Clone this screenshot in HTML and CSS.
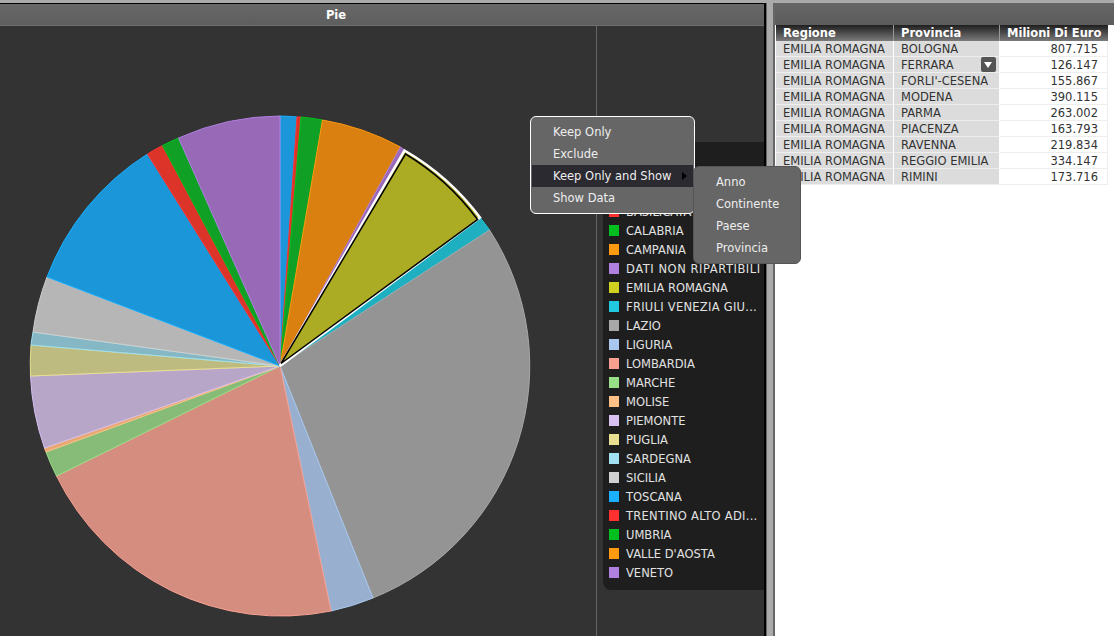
FILE: index.html
```html
<!DOCTYPE html>
<html lang="it">

<head>
  <meta charset="UTF-8">
  <title>Pie</title>
  <link rel="stylesheet" href="styles.css">
</head>

<body>
  <div class="chart-panel">
    <div class="chart-title">Pie</div>
    <div class="chart-body">
      <svg class="pie" width="597" height="610" viewBox="0 26 596 610">
        <path fill="#1b96d8" stroke="#1ab0ff" d="M280,366 L280,116 A250,250 0 0 1 297,117 Z" />
        <path fill="#dd342a" stroke="#ff3030" d="M280,366 L297,117 A250,250 0 0 1 301,117 Z" />
        <path fill="#0fa025" stroke="#00c020" d="M280,366 L301,117 A250,250 0 0 1 322.5,120 Z" />
        <path fill="#d98010" stroke="#ff9910" d="M280,366 L322.5,120 A250,250 0 0 1 400.5,147 Z" />
        <path fill="#9a6ab8" stroke="#b080e0" d="M280,366 L400.5,147 A250,250 0 0 1 404,149.5 Z" />
        <path fill="#1eb0c0" stroke="#20c8e0" d="M280,366 L480,217.5 A250,250 0 0 1 489.5,230 Z" />
        <path fill="#949494" stroke="#a8a8a8" d="M280,366 L489.5,230 A250,250 0 0 1 373,598 Z" />
        <path fill="#99afcf" stroke="#a8c8f0" d="M280,366 L373,598 A250,250 0 0 1 331,611 Z" />
        <path fill="#d58d80" stroke="#f8a090" d="M280,366 L331,611 A250,250 0 0 1 56.5,476 Z" />
        <path fill="#87bb78" stroke="#98e088" d="M280,366 L56.5,476 A250,250 0 0 1 46,452 Z" />
        <path fill="#e8a874" stroke="#ffc088" d="M280,366 L46,452 A250,250 0 0 1 44.5,448 Z" />
        <path fill="#b8a6c9" stroke="#d8c0f0" d="M280,366 L44.5,448 A250,250 0 0 1 30.5,376 Z" />
        <path fill="#bdbb80" stroke="#e8e090" d="M280,366 L30.5,376 A250,250 0 0 1 31,345 Z" />
        <path fill="#85b8c4" stroke="#a0e0f0" d="M280,366 L31,345 A250,250 0 0 1 33,332 Z" />
        <path fill="#b6b6b6" stroke="#d0d0d0" d="M280,366 L33,332 A250,250 0 0 1 47,277 Z" />
        <path fill="#1b96d8" stroke="#1ab0ff" d="M280,366 L47,277 A250,250 0 0 1 147.5,154 Z" />
        <path fill="#dd342a" stroke="#ff3030" d="M280,366 L147.5,154 A250,250 0 0 1 162.5,145.5 Z" />
        <path fill="#0fa025" stroke="#00c020" d="M280,366 L162.5,145.5 A250,250 0 0 1 178.5,138 Z" />
        <path fill="#9769b6" stroke="#b080e0" d="M280,366 L178.5,138 A250,250 0 0 1 280,116 Z" />
        <path fill="#acac24" stroke="#fff" stroke-width="2.5" d="M280,366 L404.5,150.5 A250,250 0 0 1 480,217.5 Z" />
        <path fill="#acac24" stroke="#000" stroke-width="1.5" d="M281,363.5 L405.5,154 A248,248 0 0 1 477.5,219.5 Z" />
      </svg>
      <ul class="legend">
        <li><span class="swatch c-blue"></span>ABRUZZO</li>
        <li><span class="swatch c-red"></span>BASILICATA</li>
        <li><span class="swatch c-green"></span>CALABRIA</li>
        <li><span class="swatch c-orange"></span>CAMPANIA</li>
        <li class="wider"><span class="swatch c-purple"></span>DATI NON RIPARTIBILI</li>
        <li><span class="swatch c-yellow"></span>EMILIA ROMAGNA</li>
        <li class="wide"><span class="swatch c-teal"></span>FRIULI VENEZIA GIU...</li>
        <li><span class="swatch c-gray"></span>LAZIO</li>
        <li><span class="swatch c-ltblue"></span>LIGURIA</li>
        <li><span class="swatch c-salmon"></span>LOMBARDIA</li>
        <li><span class="swatch c-ltgreen"></span>MARCHE</li>
        <li><span class="swatch c-ltorange"></span>MOLISE</li>
        <li><span class="swatch c-lilac"></span>PIEMONTE</li>
        <li><span class="swatch c-khaki"></span>PUGLIA</li>
        <li><span class="swatch c-sky"></span>SARDEGNA</li>
        <li><span class="swatch c-silver"></span>SICILIA</li>
        <li><span class="swatch c-blue"></span>TOSCANA</li>
        <li class="wide"><span class="swatch c-red"></span>TRENTINO ALTO ADI...</li>
        <li><span class="swatch c-green"></span>UMBRIA</li>
        <li><span class="swatch c-orange"></span>VALLE D'AOSTA</li>
        <li><span class="swatch c-purple"></span>VENETO</li>
      </ul>
    </div>
  </div>

  <div class="table-panel">
    <div class="table-title"></div>
    <table class="data">
      <thead>
        <tr>
          <th class="col-regione">Regione</th>
          <th class="col-provincia">Provincia</th>
          <th class="col-valore">Milioni Di Euro</th>
        </tr>
      </thead>
      <tbody>
        <tr><td>EMILIA ROMAGNA</td><td>BOLOGNA</td><td>807.715</td></tr>
        <tr><td>EMILIA ROMAGNA</td><td class="has-drop">FERRARA<span class="drop"></span></td><td>126.147</td></tr>
        <tr><td>EMILIA ROMAGNA</td><td>FORLI'-CESENA</td><td>155.867</td></tr>
        <tr><td>EMILIA ROMAGNA</td><td>MODENA</td><td>390.115</td></tr>
        <tr><td>EMILIA ROMAGNA</td><td>PARMA</td><td>263.002</td></tr>
        <tr><td>EMILIA ROMAGNA</td><td>PIACENZA</td><td>163.793</td></tr>
        <tr><td>EMILIA ROMAGNA</td><td>RAVENNA</td><td>219.834</td></tr>
        <tr><td>EMILIA ROMAGNA</td><td>REGGIO EMILIA</td><td>334.147</td></tr>
        <tr><td>EMILIA ROMAGNA</td><td>RIMINI</td><td>173.716</td></tr>
      </tbody>
    </table>
  </div>

  <div class="menu">
    <div class="menu-item">Keep Only</div>
    <div class="menu-item">Exclude</div>
    <div class="menu-item active">Keep Only and Show<span class="arrow"></span></div>
    <div class="menu-item">Show Data</div>
    <div class="submenu">
      <div class="menu-item">Anno</div>
      <div class="menu-item">Continente</div>
      <div class="menu-item">Paese</div>
      <div class="menu-item">Provincia</div>
    </div>
  </div>
</body>

</html>
```

FILE: styles.css
```css
* {
  padding: 0;
  margin: 0;
  box-sizing: border-box;
}

body {
  width: 1114px;
  height: 636px;
  overflow: hidden;
  display: flex;
  padding-top: 3px;
  background: #aaa;
  font-family: "DejaVu Sans", Verdana, sans-serif;
  font-size: 11.5px;
}

.chart-panel {
  width: 766px;
  border-top: 1px solid #000;
  border-right: 2px solid #000;
  box-shadow: 1px 0 0 #666;
  display: flex;
  flex-direction: column;
}

.chart-title {
  height: 22px;
  line-height: 23px;
  padding-right: 92px;
  text-align: center;
  font-weight: bold;
  color: #fff;
  background: linear-gradient(#686868, #5e5e5e);
  border-bottom: 1px solid #707070;
}

.chart-body {
  flex: 1;
  display: flex;
  background: #333;
}

.pie {
  flex: none;
  border-right: 1px solid #666;
}

.legend {
  list-style: none;
  width: 161px;
  height: 448px;
  margin: 116px 0 0 6px;
  padding: 41px 0 0 6px;
  background: #1e1e1e;
  border-radius: 0 0 0 8px;
  color: #e2e2e2;
}

.legend li {
  display: flex;
  align-items: center;
  height: 19px;
  white-space: nowrap;
}

.legend li.wide {
  letter-spacing: 0.27px;
}

.legend li.wider {
  letter-spacing: 0.55px;
}

.swatch {
  width: 10px;
  height: 11px;
  margin-right: 7px;
  flex: none;
}

.c-blue { background: #1ab0ff; }
.c-red { background: #ff3030; }
.c-green { background: #00c020; }
.c-orange { background: #ff9910; }
.c-purple { background: #b080e0; }
.c-yellow { background: #d0d020; }
.c-teal { background: #20c8e0; }
.c-gray { background: #a8a8a8; }
.c-ltblue { background: #a8c8f0; }
.c-salmon { background: #f8a090; }
.c-ltgreen { background: #98e088; }
.c-ltorange { background: #ffc088; }
.c-lilac { background: #d8c0f0; }
.c-khaki { background: #e8e090; }
.c-sky { background: #a0e0f0; }
.c-silver { background: #d0d0d0; }

.table-panel {
  width: 339px;
  margin-left: 9px;
  background: #fff;
  box-shadow: -2px 0 0 #666;
}

.table-title {
  height: 22px;
  background: linear-gradient(#666, #5c5c5c);
}

.data {
  border-collapse: separate;
  border-spacing: 0;
  table-layout: fixed;
  width: 332px;
  margin-left: 1px;
  color: #333;
}

.data th {
  height: 16px;
  padding: 0 0 0 7px;
  text-align: left;
  font-weight: bold;
  color: #fff;
  background: linear-gradient(#1f1f1f, #7a7a7a);
  border-right: 1px solid #999;
  white-space: nowrap;
}

.data th.col-regione { width: 118px; }
.data th.col-provincia { width: 106px; }
.data th.col-valore { border-right: 0; }

.data td {
  height: 16px;
  padding: 1px 0 0 7px;
  border-right: 1px solid #fff;
  border-bottom: 1px solid #eee;
  background: #dcdcdc;
  white-space: nowrap;
  line-height: 14px;
}

.data td:last-child {
  background: #fff;
  text-align: right;
  padding-right: 9px;
  border-right: 1px solid #eee;
}

.has-drop {
  position: relative;
}

.drop {
  position: absolute;
  right: 3px;
  top: 0;
  width: 15px;
  height: 15px;
  background: #555;
  border-radius: 2px;
}

.drop::after {
  content: "";
  position: absolute;
  left: 3px;
  top: 5px;
  border-top: 6px solid #fff;
  border-left: 4.5px solid transparent;
  border-right: 4.5px solid transparent;
}

.menu {
  position: absolute;
  left: 530px;
  top: 116px;
  width: 165px;
  height: 98px;
  padding: 4px 1px;
  background: #666;
  border: 1px solid #fff;
  border-radius: 6px;
  color: #eee;
}

.menu-item {
  position: relative;
  height: 22px;
  line-height: 23px;
  padding-left: 21px;
  white-space: nowrap;
}

.menu-item.active {
  background: #2a2a30;
}

.arrow {
  position: absolute;
  right: 6px;
  top: 7px;
  border-left: 5px solid #000;
  border-top: 4px solid transparent;
  border-bottom: 4px solid transparent;
}

.submenu {
  position: absolute;
  left: 162px;
  top: 49px;
  width: 108px;
  height: 98px;
  padding: 4px 0;
  background: #666;
  border: 1px solid #555;
  border-radius: 6px;
}

.submenu .menu-item {
  padding-left: 22px;
}
```
